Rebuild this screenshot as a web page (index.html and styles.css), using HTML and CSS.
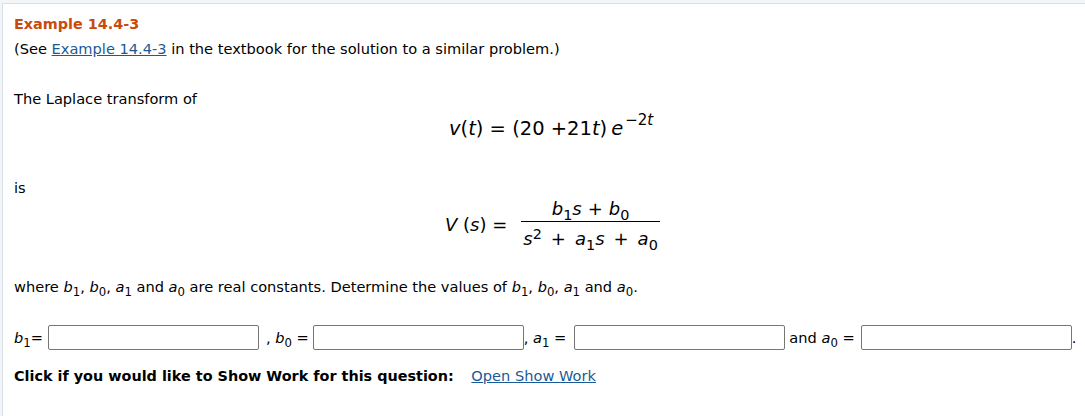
FILE: index.html
```html
<!DOCTYPE html>
<html>
<head>
<meta charset="utf-8">
<link rel="stylesheet" href="styles.css">
</head>
<body>
<div class="panel">
  <div class="title">Example 14.4-3</div>
  <div class="see">(See <a href="#" class="link">Example 14.4-3</a> in the textbook for the solution to a similar problem.)</div>

  <p class="para p1">The Laplace transform of</p>
  <div class="eq eq1">
    <span class="math big"><i>v</i>(<i>t</i>) = (20 +21<i>t</i>)<span class="e"><i>e</i></span><sup class="exp">&minus;2<i>t</i></sup></span>
  </div>

  <p class="para p2">is</p>
  <div class="eq eq2">
    <span class="math"><i>V</i> (<i>s</i>) =</span>
    <span class="frac">
      <span class="num"><i>b</i><sub>1</sub><i>s</i><span class="op">+</span><i>b</i><sub>0</sub></span>
      <span class="den"><i>s</i><sup>2</sup><span class="op op-wide">+</span><i>a</i><sub>1</sub><i>s</i><span class="op op-wide">+</span><i>a</i><sub>0</sub></span>
    </span>
  </div>

  <p class="para p3">where <i>b</i><sub>1</sub>, <i>b</i><sub>0</sub>, <i>a</i><sub>1</sub> and <i>a</i><sub>0</sub> are real constants. Determine the values of <i>b</i><sub>1</sub>, <i>b</i><sub>0</sub>, <i>a</i><sub>1</sub> and <i>a</i><sub>0</sub>.</p>

  <div class="answers">
    <span class="lbl l1"><i>b</i><sub>1</sub>=</span>
    <input class="box b1" type="text">
    <span class="lbl l2">, <i>b</i><sub>0</sub> =</span>
    <input class="box b2" type="text">
    <span class="lbl l3">, <i>a</i><sub>1</sub> =</span>
    <input class="box b3" type="text">
    <span class="lbl l4">and <i>a</i><sub>0</sub> =</span>
    <input class="box b4" type="text">
    <span class="lbl l5">.</span>
  </div>

  <div class="work">
    <b>Click if you would like to Show Work for this question:</b>
    <a href="#" class="link open">Open Show Work</a>
  </div>
</div>
</body>
</html>
```

FILE: styles.css
```css
html, body {
  margin: 0;
  padding: 0;
  background: #f3f6f9;
}
body {
  font-family: "DejaVu Sans", Verdana, sans-serif;
  font-size: 14.6px;
  color: #000;
}
b {
  font-size: 14.4px;
}
.panel {
  margin: 3px 0 0 2px;
  height: 413px;
  box-sizing: border-box;
  background: #fff;
  border-top: 1px solid #d7dee6;
  border-left: 1px solid #d7dee6;
  padding: 12px 0 0 11px;
}
.title {
  font-weight: bold;
  font-size: 14.4px;
  color: #c84b0e;
  line-height: 17px;
}
.see {
  margin-top: 7px;
  line-height: 17px;
}
.link {
  color: #1a5a96;
  text-decoration: underline;
}
.para {
  margin: 0;
  line-height: 17px;
}
.p1 { margin-top: 33px; }
.eq {
  display: flex;
  align-items: center;
}
.eq1 {
  margin-top: 6px;
  padding-left: 435px;
  height: 30px;
}
.big {
  font-size: 19.5px;
}
.e { margin-left: 4px; }
.exp {
  font-size: 15px;
  vertical-align: 10px;
  line-height: 0;
  margin-left: 2px;
}
.p2 { margin-top: 36px; }
.eq2 {
  margin-top: 3px;
  padding-left: 431px;
  font-size: 18px;
}
.frac {
  display: inline-flex;
  flex-direction: column;
  align-items: center;
  margin-left: 14px;
}
.op {
  margin: 0 6px;
}
.op-wide {
  margin: 0 9px;
}
.num {
  padding: 0 2px 2px 2px;
  border-bottom: 1px solid #000;
  line-height: 20px;
  align-self: stretch;
  text-align: center;
}
.den {
  padding: 7px 2px 0 2px;
  line-height: 20px;
}
sub, sup {
  font-size: 0.8em;
  line-height: 0;
}
sub { vertical-align: -0.35em; }
sup { vertical-align: 0.45em; }
.p3 { margin-top: 29px; }
.answers {
  display: flex;
  align-items: center;
  margin-top: 30px;
  height: 25px;
}
.lbl {
  white-space: pre;
}
.box {
  width: 211px;
  height: 25px;
  box-sizing: border-box;
  border: 1px solid #767676;
  border-radius: 2px;
  margin: 0;
  padding: 0;
  background: #fff;
}
.l1 { margin-right: 5px; }
.l2 { margin: 0 4px 0 7px; }
.l3 { margin: 0 8px 0 0; }
.l4 { margin: 0 6px 0 4px; }
.work {
  margin-top: 17px;
  line-height: 17px;
}
.open {
  margin-left: 13px;
}
```
